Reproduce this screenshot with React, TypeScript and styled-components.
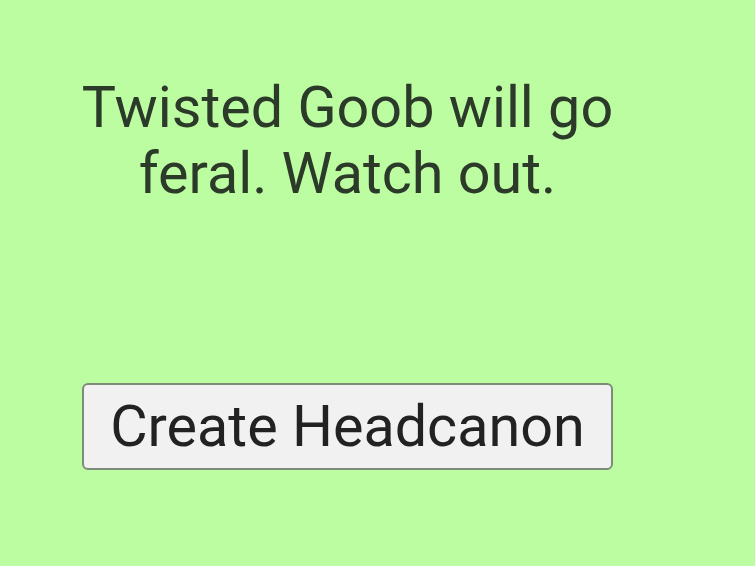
import React from "react";
import styled, { createGlobalStyle } from "styled-components";

const Global = createGlobalStyle`
  html, body { margin: 0; padding: 0; background: #bcfda2; }
  body { font-family: Roboto, "Noto Sans", sans-serif; }
`;

const Page = styled.main`
  min-height: 566px;
  padding: 75px 0 0 82px;
  box-sizing: border-box;
`;

const Column = styled.div`
  width: 531px;
  display: flex;
  flex-direction: column;
  align-items: stretch;
`;

const Message = styled.p`
  margin: 0 -12px;
  font-size: 57.5px;
  line-height: 66px;
  text-align: center;
  color: #2c3a29;
`;

const Button = styled.button`
  margin-top: 176px;
  height: 87px;
  box-sizing: border-box;
  background: #f1f1f1;
  border: 2px solid #7e8a7a;
  border-radius: 6px;
  font-family: Roboto, "Noto Sans", sans-serif;
  font-size: 57.5px;
  color: #222;
  padding: 0;
`;

export default function App() {
  return (
    <>
      <Global />
      <Page>
        <Column>
          <Message>Twisted Goob will go feral. Watch out.</Message>
          <Button>Create Headcanon</Button>
        </Column>
      </Page>
    </>
  );
}
